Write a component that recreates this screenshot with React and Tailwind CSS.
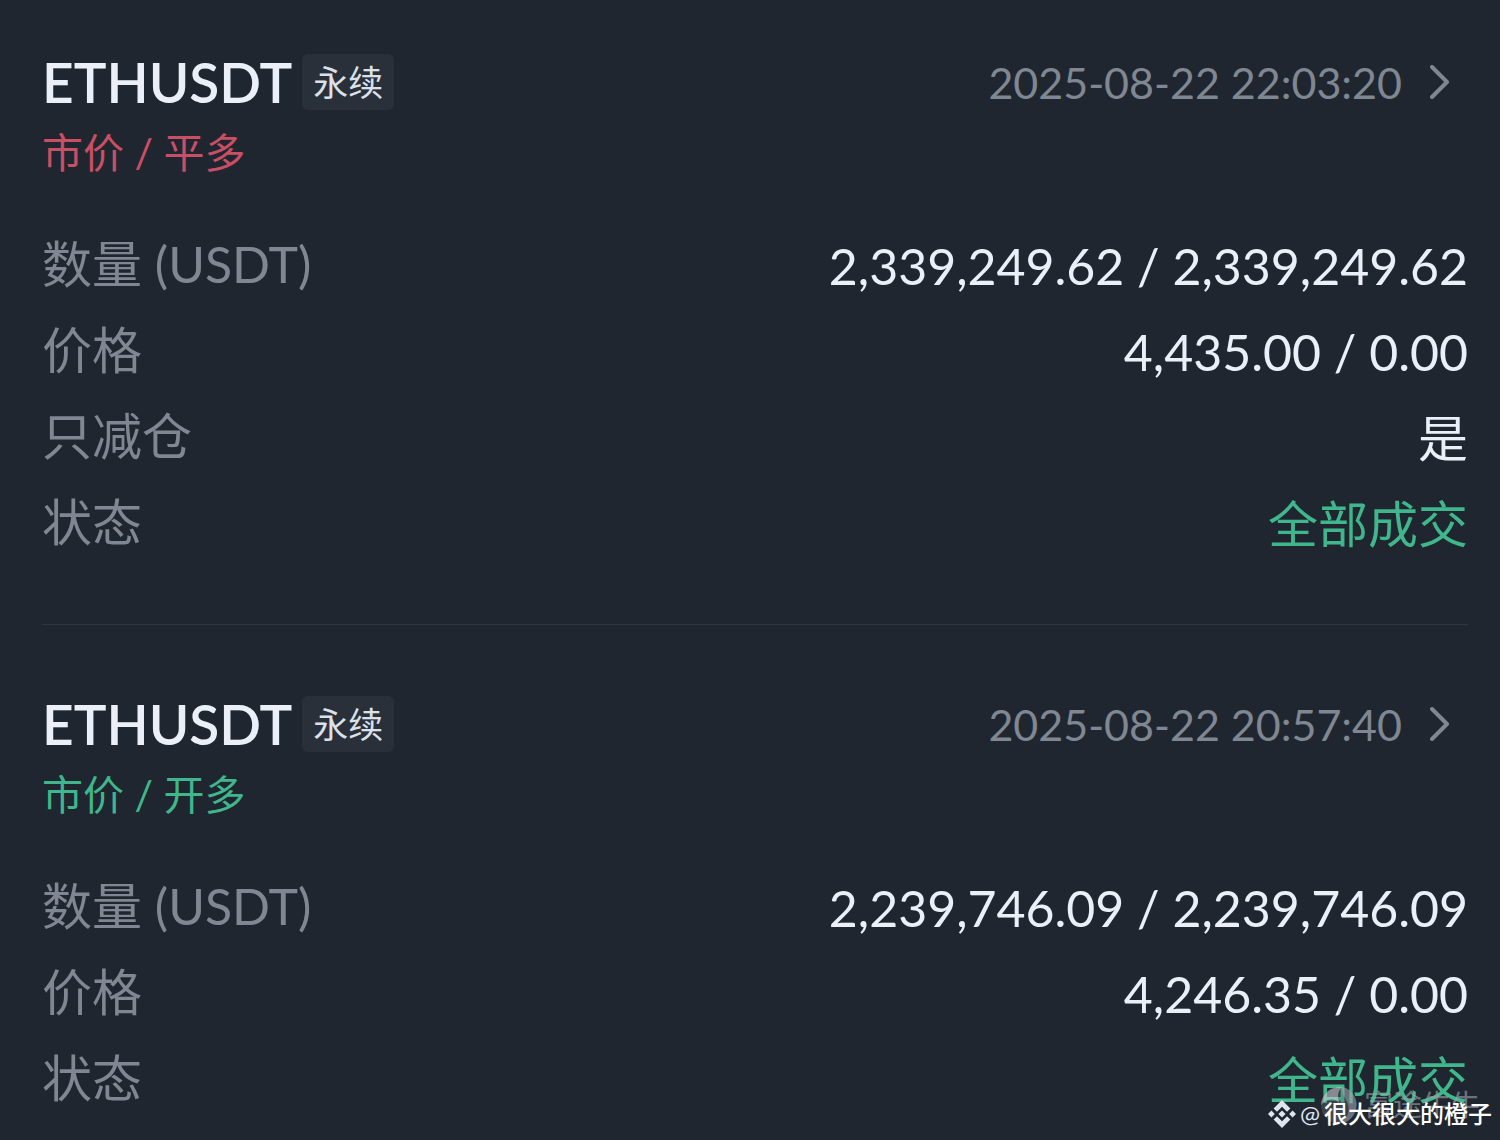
import clsx from 'clsx'

const orders = [
  {
    id: 1,
    symbol: 'ETHUSDT',
    time: '2025-08-22 22:03:20',
    side: 'close',
    type: '市价 / 平多',
    rows: [
      { label: '数量 (USDT)', value: '2,339,249.62 / 2,339,249.62' },
      { label: '价格', value: '4,435.00 / 0.00' },
      { label: '只减仓', value: '是' },
      { label: '状态', value: '全部成交', filled: true },
    ],
  },
  {
    id: 2,
    symbol: 'ETHUSDT',
    time: '2025-08-22 20:57:40',
    side: 'open',
    type: '市价 / 开多',
    rows: [
      { label: '数量 (USDT)', value: '2,239,746.09 / 2,239,746.09' },
      { label: '价格', value: '4,246.35 / 0.00' },
      { label: '状态', value: '全部成交', filled: true },
    ],
  },
]

function Chevron() {
  return (
    <svg viewBox="0 0 20 34" className="h-[34px] w-5" fill="none" stroke="currentColor" strokeWidth="4" strokeLinecap="round" strokeLinejoin="round" aria-hidden="true">
      <path d="M2 2 L17 17 L2 32" />
    </svg>
  )
}

function BinanceLogo() {
  return (
    <svg viewBox="0 0 28 28" className="size-7 text-[#dfe4ee]" fill="currentColor" aria-hidden="true">
      <path d="M14 0 L22.4 8.4 L19 11.8 L14 6.8 L9 11.8 L5.6 8.4Z" />
      <path d="M14 28 L22.4 19.6 L19 16.2 L14 21.2 L9 16.2 L5.6 19.6Z" />
      <path d="M3.4 10.6 L6.8 14 L3.4 17.4 L0 14Z" />
      <path d="M24.6 10.6 L28 14 L24.6 17.4 L21.2 14Z" />
      <path d="M14 10.4 L17.6 14 L14 17.6 L10.4 14Z" />
    </svg>
  )
}

function FutuLogo() {
  return (
    <svg viewBox="0 0 38 38" className="size-[38px]" fill="none" aria-hidden="true">
      <circle cx="19" cy="19" r="18" fill="#6b727d" fillOpacity="0.6" />
      <path d="M1 19 C2 6 13 0 22 1 C17 6 17 12 20 18 C15 11 7 12 1 19Z" fill="#c9ccd3" />
      <path d="M22 1 C34 3 40 17 34 28 C30 35 25 37 20 37 C29 32 31 22 26 14 C24 10 22 6 22 1Z" fill="#a0a4ae" />
      <path d="M17 16 C23 20 25 28 20 37 C12 37 5 32 2 25 C8 28 16 26 17 16Z" fill="#59606b" />
    </svg>
  )
}

function OrderCard({ order }) {
  return (
    <article className="border-b border-[#2f3640] pt-[71px] pb-[59px] first:pt-[54px] last:border-b-0 last:pb-0">
      <header className="flex h-14 items-center justify-between">
        <div className="flex items-center gap-[10px]">
          <h2 className="text-[55px] leading-none font-semibold text-[#eaeff8]">{order.symbol}</h2>
          <span className="flex h-14 items-center rounded-md bg-[#29303a] px-[11px] text-[35px] leading-none font-normal text-[#dbe1ea]">
            永续
          </span>
        </div>
        <a href={`#order-${order.id}`} className="mr-[18px] flex items-center gap-7 text-[43px] leading-none text-[#7f8792]">
          <time>{order.time}</time>
          <Chevron />
        </a>
      </header>
      <p
        className={clsx(
          'mt-4 text-[41px] leading-[54px]',
          order.side === 'close' ? 'text-[#c94f64]' : 'text-[#3fb68b]',
        )}
      >
        {order.type}
      </p>
      <dl className="mt-[41px]">
        {order.rows.map((row) => (
          <div key={row.label} className="flex h-[86px] items-center justify-between text-[50px] leading-none">
            <dt className="text-[#7f8792]">{row.label}</dt>
            <dd className={clsx('pt-1', row.filled ? 'text-[#3fb68b]' : 'text-[#eaeff8]')}>{row.value}</dd>
          </div>
        ))}
      </dl>
    </article>
  )
}

function Watermarks() {
  return (
    <>
      <div className="absolute right-5 bottom-4 flex items-center gap-[6px] text-[29px] leading-9 text-[#a0a4ae] opacity-60">
        <FutuLogo />
        富途牛牛
      </div>
      <div className="absolute right-2 bottom-2 flex items-center gap-1 text-[24px] leading-9 font-medium text-white">
        <BinanceLogo />
        <span className="flex gap-1">
          <span className="font-normal text-[#dfe4ee]">@</span>
          很大很大的橙子
        </span>
      </div>
    </>
  )
}

export default function App() {
  return (
    <main
      lang="zh-CN"
      className="relative min-h-screen bg-[#20262f] pr-8 pl-[42px] font-['Lato','Noto_Sans_CJK_SC',sans-serif]"
    >
      <section>
        {orders.map((order) => (
          <OrderCard key={order.id} order={order} />
        ))}
      </section>
      <Watermarks />
    </main>
  )
}
